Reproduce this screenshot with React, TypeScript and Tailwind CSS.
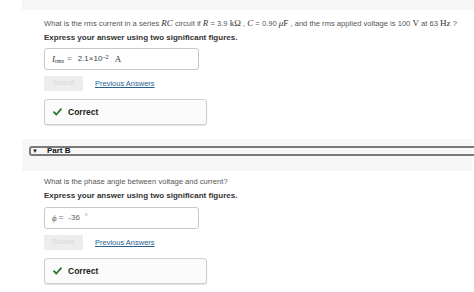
import React from 'react';

const serif = "font-['Liberation_Serif',serif] text-[9px] leading-[10px] text-[#333]";

function Check() {
  return (
    <svg width="9" height="8" viewBox="0 0 9 8" aria-hidden="true">
      <path d="M1 4.2 L3.4 6.5 L8 1.2" fill="none" stroke="#2e7d32" strokeWidth="1.9" strokeLinecap="round" strokeLinejoin="round" />
    </svg>
  );
}

function AnswerBlock({ children, marginTop }: { children: React.ReactNode; marginTop: string }) {
  return (
    <div className={marginTop}>
      <div className="h-[22px] w-[155px] rounded-[3px] border border-[#c8c8c8] bg-white flex items-center pl-[7px] text-[8px] leading-[10px] text-[#444]">
        {children}
      </div>
      <div className="mt-[6px] flex items-center h-[15px]">
        <div className="w-[39px] h-[15px] bg-[#ededed] text-[7px] text-[#d8d8d8] flex items-center justify-center">Submit</div>
        <a className="ml-[12px] text-[7.5px] text-[#2a5f8f] underline">Previous Answers</a>
      </div>
      <div className="mt-[8px] w-[163px] h-[26px] rounded-[3px] border border-[#cfcfcf] bg-[#fbfbfb] shadow-[0_1px_1px_rgba(0,0,0,0.12)] flex items-center pl-[8px]">
        <Check />
        <span className="ml-[6px] text-[8.5px] font-bold text-[#222]">Correct</span>
      </div>
    </div>
  );
}

export default function App() {
  return (
    <div className="w-[474px] h-[292px] bg-white overflow-hidden font-['Liberation_Sans',Arial,sans-serif]">
      <div className="ml-[22px] h-[10px] bg-[#f6f6f6]" />

      {/* Part A */}
      <div className="pl-[44px]">
        <p className="mt-[8px] h-[10px] text-[7.6px] leading-[10px] text-[#555] whitespace-nowrap">
          What is the rms current in a series <i className={serif}>RC</i> circuit if{' '}
          <i className={serif}>R</i> = 3.9 <span className={serif}>kΩ</span> ,{' '}
          <i className={serif}>C</i> = 0.90 <span className={serif}><i>μ</i>F</span> , and the rms applied voltage is 100{' '}
          <span className={serif}>V</span> at 63 <span className={serif}>Hz</span> ?
        </p>
        <p className="mt-[5px] h-[10px] text-[8px] leading-[10px] font-bold text-[#333]">Express your answer using two significant figures.</p>
        <div className="h-[5px]" />
        <AnswerBlock marginTop="mt-0">
          <span className={`${serif} italic`}>I</span>
          <span className="font-['Liberation_Serif',serif] text-[6px] leading-[6px] text-[#333] mt-[3px]">rms</span>
          <span className="ml-[3px] text-[#666]">=</span>
          <span className="ml-[6px]">2.1×10</span>
          <span className="text-[5.5px] leading-[6px] -mt-[5px]">−2</span>
          <span className={`ml-[6px] ${serif}`}>A</span>
        </AnswerBlock>
      </div>

      {/* Part B header */}
      <div className="mt-[14px] ml-[22px] w-[450px] h-[32px] bg-[#f7f7f7] pt-[7px] pl-[7px]">
        <div className="h-[10px] w-[460px] border-2 border-r-0 border-[#7a7a7a] rounded-l-[3px] flex items-center">
          <span className="ml-[1px] text-[6px] leading-none text-[#222]">▼</span>
          <span className="ml-[9px] text-[8px] font-bold text-[#111] leading-none">Part B</span>
        </div>
      </div>

      <div className="pl-[44px]">
        <p className="mt-[6px] h-[10px] text-[7.6px] leading-[10px] text-[#555]">What is the phase angle between voltage and current?</p>
        <p className="mt-[4px] h-[10px] text-[8px] leading-[10px] font-bold text-[#333]">Express your answer using two significant figures.</p>
        <AnswerBlock marginTop="mt-[6px]">
          <span className="font-['Liberation_Serif',serif] text-[9px] leading-[10px] italic text-[#555]">ϕ</span>
          <span className="ml-[2px] text-[#666]">=</span>
          <span className="ml-[5px] text-[#666]">-36</span>
          <span className="ml-[5px] text-[#888] text-[7px] -mt-[3px]">°</span>
        </AnswerBlock>
      </div>
    </div>
  );
}
